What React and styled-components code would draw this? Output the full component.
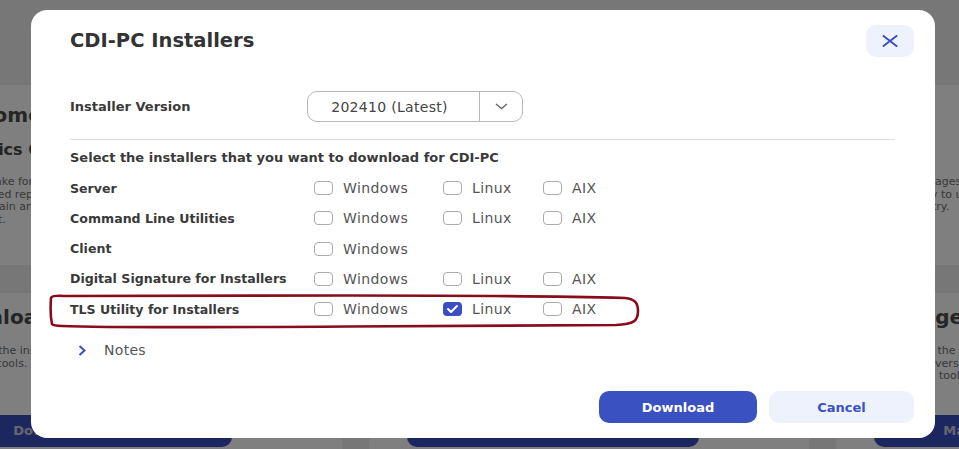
import React from 'react'
import styled, { createGlobalStyle } from 'styled-components'

const installers = [
  { name: 'Server', os: ['Windows', 'Linux', 'AIX'], checked: [] },
  { name: 'Command Line Utilities', os: ['Windows', 'Linux', 'AIX'], checked: [] },
  { name: 'Client', os: ['Windows'], checked: [] },
  { name: 'Digital Signature for Installers', os: ['Windows', 'Linux', 'AIX'], checked: [] },
  { name: 'TLS Utility for Installers', os: ['Windows', 'Linux', 'AIX'], checked: ['Linux'] },
]

const cards = [
  {
    title: 'Welcome',
    sub: 'Analytics Cloud',
    text: 'Our data lake for standardized reports in every domain and component.',
  },
  { title: 'Platform', sub: 'Services', text: 'Explore the services available.' },
  {
    title: 'Data',
    sub: 'Use',
    text: 'Manage images in a unified way to use in your industry.',
  },
  { title: 'Download', text: 'Download the installers and Linux tools.', button: 'Download Installers' },
  { title: 'Configure', text: 'Configure the connected products.', button: 'Open Settings' },
  { title: 'Manage', text: 'Manage all the connected versions of compatible tools.', button: 'Manage Installations' },
]

const App = () => {
  return (
    <>
      <GlobalStyle />
      <Page>
        <CardGrid>
          {cards.map((card) => (
            <Card key={card.title} $lower={!!card.button}>
              <CardHeading>{card.title}</CardHeading>
              {card.sub && <CardSub>{card.sub}</CardSub>}
              <CardText>{card.text}</CardText>
              {card.button && <CardButton>{card.button}</CardButton>}
            </Card>
          ))}
        </CardGrid>
      </Page>

      <Overlay>
        <Dialog>
          <Header>
            <Title>CDI-PC Installers</Title>
            <CloseButton type="button" aria-label="Close">
              <svg width="16" height="12" viewBox="0 0 16 12">
                <path d="M1.5 1 L14.5 11 M14.5 1 L1.5 11" stroke="#3b4fc0" strokeWidth="2" strokeLinecap="round" />
              </svg>
            </CloseButton>
          </Header>

          <VersionRow>
            <FieldLabel>Installer Version</FieldLabel>
            <Select>
              <SelectValue>202410 (Latest)</SelectValue>
              <SelectToggle>
                <svg width="13" height="7" viewBox="0 0 13 7">
                  <polyline points="1,1 6.5,5.5 12,1" fill="none" stroke="#666" strokeWidth="1.4" />
                </svg>
              </SelectToggle>
            </Select>
          </VersionRow>

          <Divider />

          <SectionTitle>Select the installers that you want to download for CDI-PC</SectionTitle>

          <InstallerList>
            {installers.map((item) => (
              <InstallerRow key={item.name}>
                <RowLabel>{item.name}</RowLabel>
                {item.os.map((os) => {
                  const checked = item.checked.includes(os)
                  return (
                    <Option key={os}>
                      <Box $checked={checked}>
                        {checked && (
                          <svg width="13" height="10" viewBox="0 0 13 10">
                            <polyline points="2,5 5,8 11,2" fill="none" stroke="#fff" strokeWidth="2" strokeLinecap="round" strokeLinejoin="round" />
                          </svg>
                        )}
                      </Box>
                      <OptionText>{os}</OptionText>
                    </Option>
                  )
                })}
              </InstallerRow>
            ))}
          </InstallerList>

          <NotesToggle>
            <svg width="8" height="11" viewBox="0 0 8 11">
              <polyline points="1.5,1 6.5,5.5 1.5,10" fill="none" stroke="#3b4fc0" strokeWidth="2" />
            </svg>
            <span>Notes</span>
          </NotesToggle>

          <Footer>
            <PrimaryButton type="button">Download</PrimaryButton>
            <SecondaryButton type="button">Cancel</SecondaryButton>
          </Footer>

          {/* hand drawn highlight around the TLS row */}
          <Annotation width="592" height="36" viewBox="0 0 592 36">
            <path
              d="M4 31 C2.5 24, 2.5 12, 3 5 C3.5 3, 8 2.5, 16 3 L300 2.5 C420 2.5, 520 3.5, 577 5 C587 6, 590 10, 590 18 C590 28, 586 31, 568 32 L300 33.5 C150 34.5, 40 34, 14 33 C8 32.8, 5 32.5, 4 31 Z"
              fill="none"
              stroke="#870d1c"
              strokeWidth="2.6"
            />
          </Annotation>
        </Dialog>
      </Overlay>
    </>
  )
}

const GlobalStyle = createGlobalStyle`
  body {
    margin: 0;
    font-family: "DejaVu Sans", "Liberation Sans", sans-serif;
  }
  * {
    box-sizing: border-box;
  }
`

// Page behind the dialog
const Page = styled.div`
  position: relative;
  height: 449px;
  overflow: hidden;
  background: #efefef;
`

const CardGrid = styled.div`
  display: grid;
  grid-template-columns: repeat(3, 440px);
  grid-template-rows: 180px 170px;
  column-gap: 27px;
  row-gap: 28px;
  padding-top: 85px;
  margin-left: -98px;
`

const Card = styled.div`
  display: flex;
  flex-direction: column;
  background: #fff;
  padding: ${(p) => (p.$lower ? '12px 38px 16px' : '18px 38px')};
`

const CardHeading = styled.h2`
  margin: 0;
  font-size: 20px;
  line-height: 24px;
  font-weight: 700;
  color: #4a4a4a;
`

const CardSub = styled.h3`
  margin: 13px 0 0;
  font-size: 16px;
  line-height: 20px;
  font-weight: 700;
  color: #4a4a4a;
`

const CardText = styled.p`
  margin: 16px 0 0;
  width: 140px;
  font-size: 11px;
  line-height: 12.7px;
  color: #707070;
`

const CardButton = styled.div`
  margin-top: auto;
  width: 292px;
  height: 32px;
  border-radius: 0 0 10px 10px;
  background: #3a4fbf;
  color: #c9cde0;
  font-size: 13px;
  font-weight: 700;
  line-height: 32px;
  text-align: center;
`

// Dialog
const Overlay = styled.div`
  position: fixed;
  inset: 0;
  display: flex;
  align-items: flex-start;
  padding: 10px 24px 0 31px;
  background: rgba(0, 0, 0, 0.5);
`

const Dialog = styled.div`
  position: relative;
  display: flex;
  flex-direction: column;
  width: 904px;
  height: 428px;
  padding: 15px 21px 15px 39px;
  background: #fff;
  border-radius: 16px;
`

const Header = styled.div`
  display: flex;
  justify-content: space-between;
  align-items: center;
`

const Title = styled.h1`
  margin: 0;
  font-size: 19.5px;
  line-height: 32px;
  font-weight: 700;
  color: #333;
`

const CloseButton = styled.button`
  display: flex;
  align-items: center;
  justify-content: center;
  width: 48px;
  height: 32px;
  padding: 0;
  border: none;
  border-radius: 10px;
  background: #eef2fd;
`

const VersionRow = styled.div`
  display: grid;
  grid-template-columns: 237px 216px;
  align-items: center;
  margin-top: 34px;
`

const FieldLabel = styled.span`
  font-size: 13px;
  font-weight: 700;
  color: #3a3a3a;
`

const Select = styled.div`
  display: flex;
  height: 31px;
  border: 1px solid #b8b8b8;
  border-radius: 10px;
`

const SelectValue = styled.div`
  flex: 1;
  display: flex;
  align-items: center;
  justify-content: center;
  padding-right: 8px;
  font-size: 14px;
  letter-spacing: 0.3px;
  color: #444;
`

const SelectToggle = styled.div`
  display: flex;
  align-items: center;
  justify-content: center;
  width: 43px;
  border-left: 1px solid #b8b8b8;
`

const Divider = styled.hr`
  margin: 17px 19px 0 0;
  border: none;
  border-top: 1px solid #dedede;
`

const SectionTitle = styled.p`
  margin: 10px 0 0;
  font-size: 13px;
  line-height: 16px;
  font-weight: 700;
  color: #3a3a3a;
`

const InstallerList = styled.div`
  margin-top: 7px;
`

const InstallerRow = styled.div`
  display: grid;
  grid-template-columns: 244px 129px 100px 100px;
  align-items: center;
  height: 30.25px;
`

const RowLabel = styled.span`
  font-size: 12.6px;
  font-weight: 700;
  color: #3a3a3a;
`

const Option = styled.label`
  display: flex;
  align-items: center;
  gap: 10px;
`

const Box = styled.span`
  display: flex;
  align-items: center;
  justify-content: center;
  width: 19px;
  height: 14px;
  border-radius: 4px;
  border: ${(p) => (p.$checked ? 'none' : '1.2px solid #ababab')};
  background: ${(p) => (p.$checked ? '#3b4fc4' : '#fff')};
`

const OptionText = styled.span`
  font-size: 14px;
  letter-spacing: 0.4px;
  color: #555;
`

const NotesToggle = styled.div`
  display: flex;
  align-items: center;
  gap: 18px;
  height: 20px;
  margin-top: 16px;
  padding-left: 8px;
  font-size: 14px;
  letter-spacing: 0.3px;
  color: #555;
`

const Footer = styled.div`
  display: flex;
  justify-content: flex-end;
  gap: 12px;
  margin-top: auto;
`

const PrimaryButton = styled.button`
  width: 158px;
  height: 32px;
  border: none;
  border-radius: 10px;
  background: #3a52c1;
  color: #fff;
  font-family: inherit;
  font-size: 13px;
  font-weight: 700;
`

const SecondaryButton = styled(PrimaryButton)`
  width: 145px;
  background: #eef2fd;
  color: #3a52c1;
`

const Annotation = styled.svg`
  position: absolute;
  left: 17px;
  top: 283px;
  pointer-events: none;
`

export default App
